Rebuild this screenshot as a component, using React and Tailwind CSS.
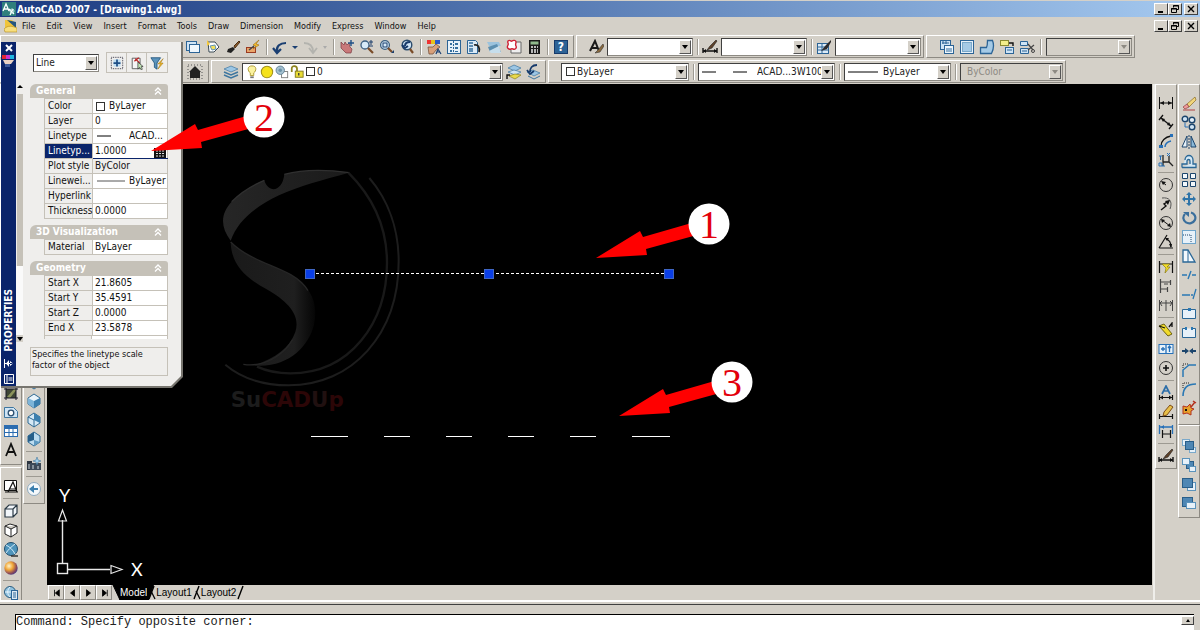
import { useState } from 'react';

const MENUS = ['File', 'Edit', 'View', 'Insert', 'Format', 'Tools', 'Draw', 'Dimension', 'Modify', 'Express', 'Window', 'Help'];

// all icons live on a 16x16 grid
const ICONS = {
  plot: <><rect x="1.5" y="2.5" width="10" height="9" fill="#cfe4f5" stroke="#2c6496" /><rect x="4.5" y="5.5" width="10" height="8" fill="#eef6fc" stroke="#2c6496" /></>,
  publish: <><path d="M3 3h7l4 5-5 5H4z" fill="#fff" stroke="#3b4a55" /><path d="M2 1v6l3-2z" fill="#f5c93c" /><path d="M5 7l5-1 1 4-4 1z" fill="#f4e05c" stroke="#5d92b8" /></>,
  match: <><path d="M14 2L9 7l1 2 5-6z" fill="#8b5a2b" stroke="#4a2d12" /><path d="M8 8l-5 2-1 3 4 1 4-4z" fill="#222" /></>,
  blockEdit: <><rect x="1.5" y="8.5" width="9" height="5" fill="#e9a56a" stroke="#9a3b22" /><path d="M14 1L8 6l3 1-3 3 6-4-3-1z" fill="#f7c02c" stroke="#a06b11" strokeWidth=".6" /><path d="M4 11l5-4" stroke="#444" strokeWidth="1.5" /></>,
  undo: <path d="M5 13c-1-6 3-9 9-9M1 9l4 5 4-4" fill="none" stroke="#1b3f72" strokeWidth="2.2" />,
  redo: <path d="M2 4c6 0 9 3 9 9M7 9l4 5 4-5" fill="none" stroke="#b3b3ae" strokeWidth="1.8" />,
  drop: <path d="M5 7h6l-3 3z" fill="#1b3f72" />,
  dropOff: <path d="M6 7h4l-2 3z" fill="#aaa" />,
  pan: <><path d="M2 3l3 3 1-3 2 3 2-2 1 4 2 2-1 4H7L2 9z" fill="#c9797a" stroke="#7a3b40" strokeWidth=".7" /><path d="M12 1v6M9 4h6" stroke="#1f4f86" strokeWidth="1.4" /></>,
  zoom: <><circle cx="6" cy="6" r="4" fill="#d7ebf8" stroke="#3b5f80" strokeWidth="1.3" /><path d="M9 9l5 5" stroke="#7a4c28" strokeWidth="2.2" /><path d="M12 1v5M10 3h4M10 7h4" stroke="#1d3f6c" /></>,
  zoomWin: <><circle cx="6" cy="6" r="4.4" fill="#d7ebf8" stroke="#3b5f80" strokeWidth="1.3" /><rect x="4" y="4" width="4" height="4" fill="none" stroke="#1d3f6c" /><path d="M9 9l4 4" stroke="#7a4c28" strokeWidth="2.2" /><path d="M12 14h3v-3z" fill="#1d3f6c" /></>,
  zoomPrev: <><circle cx="8" cy="6" r="4.8" fill="#cfe4f5" stroke="#2a4b6c" strokeWidth="1.4" /><path d="M11 10l3 4" stroke="#7a4c28" strokeWidth="2.2" /><path d="M11 3c-3 0-5 1-5 4M3 6l3 3 3-2" fill="none" stroke="#163a6b" strokeWidth="2" /></>,
  props: <><path d="M1 1h4v4H1z" fill="#e33" /><path d="M5 1h4v4H5z" fill="#e6c21a" /><path d="M9 1h5v4H9z" fill="#2a58c8" /><path d="M2 8h5l3-3 4 3-4 3-3 4H3z" fill="#d8a07a" stroke="#6b4632" strokeWidth=".7" /><path d="M10 15l2-5 3 5M11 13h3" stroke="#1b3f72" fill="none" strokeWidth="1.2" /></>,
  dc: <><rect x="1.5" y="1.5" width="13" height="13" fill="#e7f1f9" stroke="#2c6496" /><path d="M4 4h2v2H4zM4 8h2v1H4zM4 11h2v2H4zM9 4h3v2H9zM9 8h3v2H9zM9 12h3v1H9z" fill="#356f9f" /><path d="M7.500 2v12" stroke="#2c6496" strokeDasharray="2 1" /></>,
  tool: <><path d="M1.500 1.500h8l2 2v11h-10z" fill="#dcebf7" stroke="#2c6496" /><path d="M3 4h4M3 7h4M3 10h4M3 12h4" stroke="#356f9f" strokeWidth="1.5" /><path d="M8 6c4-1 6 2 5 7" fill="none" stroke="#222" strokeWidth="1.8" /></>,
  sheet: <><path d="M1 3h12l2 4H3z" fill="#9cc3dd" /><path d="M2 8l9-3 4 8H4z" fill="#5c8fb0" /><path d="M3 12l10-5 2 7H5z" fill="#c6deec" /></>,
  markup: <><path d="M10 3h5v11H5v-3" fill="#eee" stroke="#666" /><path d="M2 2c2-2 3 1 4 0s4-1 4 1-1 2 0 4-1 4-3 3-2 1-4 0-2-2-1-4-1-2 0-4z" fill="#fff" stroke="#cf2033" strokeWidth="1.4" /></>,
  calc: <><rect x="3" y="1" width="11" height="14" fill="#1a1a1a" /><rect x="4.500" y="2.500" width="8" height="3" fill="#8fb98c" /><path d="M5 8h2M8 8h2M11 8h1M5 11h2M8 11h2M11 11h1M5 13h2M8 13h2M11 13h1" stroke="#eee" strokeWidth="1.4" /></>,
  textStyle: <><path d="M2 12L7 2l4 10M4 9h6" fill="none" stroke="#1a1a1a" strokeWidth="2" /><path d="M15 5l-5 6-3 3 5-1 4-6z" fill="#8b6a3d" stroke="#333" strokeWidth=".6" /></>,
  dimStyle: <><path d="M1 9v5M15 9v5M1 12h14" stroke="#111" strokeWidth="1.4" /><path d="M1 12l3-2v4zM15 12l-3-2v4z" fill="#111" /><path d="M14 1L8 7l-3 4 5-2 5-7z" fill="#5e4128" stroke="#222" strokeWidth=".6" /></>,
  tableStyle: <><rect x="1.500" y="4.500" width="11" height="10" fill="#dcebf7" stroke="#2c6496" /><path d="M2 8h11M2 11h11M6 5v9" stroke="#2c6496" /><path d="M15 1l-5 5-5 6 6-2 4-7z" fill="#2d2a2a" /></>,
  vports: <><rect x="1.500" y="1.500" width="10" height="9" fill="#cfe4f5" stroke="#2c6496" /><path d="M3 4h7M4 2v3M7 2v3" stroke="#2c6496" /><rect x="5.500" y="6.500" width="9" height="8" fill="#eef6fc" stroke="#2c6496" /><path d="M7 10h6M7 12h6" stroke="#356f9f" /></>,
  vpOne: <><rect x="1.500" y="1.500" width="13" height="13" fill="#e7f1f9" stroke="#2c6496" /><rect x="3.500" y="3.500" width="9" height="9" fill="#a5cae6" stroke="#7ba9ca" /></>,
  vpPoly: <path d="M8.500 1.500h5c2 5 1 9-1 13h-11v-6h6c1-2 1-4 1-7z" fill="#a5cae6" stroke="#2c6496" strokeWidth="1.300" />,
  vpObj: <><rect x="1.500" y="1.500" width="8" height="5" fill="#f3ee8a" stroke="#8a8a30" /><path d="M10 4h4v3" stroke="#111" fill="none" strokeWidth="1.400" /><rect x="6.500" y="8.500" width="8" height="6" fill="#cfe4f5" stroke="#2c6496" /><path d="M8 11h5" stroke="#2c6496" /></>,
  vpClip: <><path d="M1.500 2.500h7v4h-7zM1.500 9.500h8v5h-8z" fill="#cfe4f5" stroke="#2c6496" /><path d="M3 12h5" stroke="#2c6496" /><path d="M9 5l5 6M9 11l6-5" stroke="#444" strokeWidth="1.200" /><circle cx="14" cy="12" r="1.500" fill="none" stroke="#444" /></>,
  house: <><path d="M2 8l6-6 6 6z" fill="#222" /><rect x="3" y="7" width="10" height="7" fill="#222" /><path d="M1 1h14v14H1z" fill="none" stroke="#555" strokeDasharray="1 2" /></>,
  layers: <><path d="M1 5l7-3 7 3-7 3z" fill="#9cc6e4" stroke="#3e769f" strokeWidth=".700" /><path d="M1 8l7 3 7-3M1 11l7 3 7-3" fill="none" stroke="#3e769f" strokeWidth="1.400" /></>,
  layerCur: <><path d="M2 4l6-3 7 3-6 3z" fill="#9cc6e4" stroke="#3e769f" strokeWidth=".700" /><path d="M2 8l6-2 7 2-6 3z" fill="#cfe4f5" stroke="#3e769f" strokeWidth=".700" /><path d="M3 12l6-2 6 1-6 4z" fill="#e8d84b" stroke="#8d8420" strokeWidth=".700" /><path d="M1 15v-4h3" fill="none" stroke="#111" strokeWidth="1.400" /></>,
  layerPrev: <><path d="M2 8l6-2 7 3-6 3z" fill="#9cc6e4" stroke="#3e769f" strokeWidth=".700" /><path d="M3 12l6 3 6-3" fill="none" stroke="#3e769f" /><path d="M12 1c-5 0-7 3-7 7M2 6l3 4 4-3" fill="none" stroke="#163a6b" strokeWidth="1.800" /></>,
  bulb: <><path d="M8 1c6 0 5 6 2 8v3H6V9C3 7 2 1 8 1z" fill="#fbf3a0" stroke="#a9952b" /><path d="M6 13h4v2H6z" fill="#777" /></>,
  sun: <><circle cx="8" cy="8" r="6.500" fill="#f5e21b" stroke="#a2921a" strokeWidth="1.200" /></>,
  freeze: <><rect x="7.500" y="7.500" width="7" height="7" fill="#fff" stroke="#777" /><circle cx="6" cy="6" r="4.800" fill="#a4c1d1" stroke="#5f7f92" /><circle cx="6" cy="6" r="2" fill="#6d93a8" /></>,
  lock: <><path d="M2 8V4c0-4 6-3 6 0v4" fill="none" stroke="#8d8420" strokeWidth="2" /><rect x="6" y="7" width="9" height="7" fill="#e9dc35" stroke="#7c741b" /><path d="M10 9v3" stroke="#333" strokeWidth="1.500" /></>,
  qselect: <><rect x="1.500" y="1.500" width="13" height="13" fill="none" stroke="#223" strokeDasharray="1 1" /><rect x="4" y="4" width="8" height="8" fill="#bcdcf2" /><path d="M8 4v8M4 8h8" stroke="#1f4f86" strokeWidth="2" /></>,
  pick: <><path d="M2.500 2.500h9v12h-9z" fill="#f5f5f5" stroke="#555" /><path d="M6 3l5 5M10 2L5 6" stroke="#b92323" strokeWidth="1.500" /><path d="M9 7v8l2-2 2 3 1-1-1-3h2z" fill="#bfe3b4" stroke="#333" strokeWidth=".800" /></>,
  filter: <><path d="M1 2h11L8 8v7l-3-2V8z" fill="#5b93bb" stroke="#24587f" /><path d="M15 3l-6 6h3l-3 6 6-7h-3z" fill="#f7c02c" stroke="#9a6f0d" strokeWidth=".600" /></>,
  wipe: <><path d="M3 4h10v9H3z" fill="#3d4535" /><path d="M4 12l7-8h3L7 13z" fill="#8a935c" /><path d="M1 4h14M3 1v14M13 1v14M1 13h14" stroke="#1b1b2b" /></>,
  region: <><path d="M1.500 3.500h9l4 4v6h-13z" fill="#cfe4f5" stroke="#3e769f" /><circle cx="8" cy="9" r="2.800" fill="#fff" stroke="#2b4f70" strokeWidth="1.300" /></>,
  table: <><rect x="1.500" y="2.500" width="13" height="11" fill="#fff" stroke="#2b6cb0" /><path d="M1 3h14v3H1z" fill="#2b6cb0" /><path d="M1 9.500h14M6 6v8M10 6v8" stroke="#2b6cb0" /></>,
  mtext: <path d="M3 14L8 2l5 12M5 10h6" fill="none" stroke="#111" strokeWidth="1.800" />,
  wipeText: <><path d="M1.500 2.500h12v10h-12z" fill="#fff" stroke="#111" /><path d="M5 14l5-10 4 10M7 11h6M2 14h13" fill="none" stroke="#111" strokeWidth="1.200" /></>,
  box3d: <path d="M2 6h8v8H2zM2 6l4-4h8v8l-4 4M10 6l4-4" fill="#f2f6fa" stroke="#2a3945" strokeWidth="1.200" />,
  wire: <path d="M2 4l5-2 7 2v7l-6 4-6-3zM2 4l6 3 6-3M8 7v8" fill="#fff" stroke="#222" />,
  sphereX: <><circle cx="8" cy="8" r="6.500" fill="#4f94bb" stroke="#1f4c6c" /><path d="M3 4c4 2 7 5 9 9M12 3C8 6 5 9 3 12" stroke="#d5ecf8" fill="none" /><path d="M8 15h7" stroke="#333" strokeWidth="1.500" /></>,
  sphere: <><defs><radialGradient id="ball" cx=".35" cy=".35" r=".75"><stop offset="0" stopColor="#fff3c9" /><stop offset=".4" stopColor="#f0a537" /><stop offset=".75" stopColor="#8a4a5a" /><stop offset="1" stopColor="#3b3690" /></radialGradient></defs><circle cx="8" cy="8" r="6.700" fill="url(#ball)" /></>,
  render: <><circle cx="7" cy="7" r="5.500" fill="#8fc1de" stroke="#2a5d80" /><path d="M2 7h10M7 2c-3 3-3 7 0 10" fill="none" stroke="#e9f6ff" /><rect x="8.500" y="5.500" width="6" height="9" fill="#dbe9f3" stroke="#2c6496" /><path d="M10 8h3M10 10h3M10 12h3" stroke="#2c6496" /></>,
  isoTop: <path d="M8 1l6 4v6l-6 4-6-4V5z" fill="#e9f4fb" stroke="#2f6a94" />,
  isoSW: <><path d="M8 1l6 4v6l-6 4-6-4V5z" fill="#e9f4fb" stroke="#2f6a94" /><path d="M2 5l6 3v7l-6-4z" fill="#7db4d8" /><path d="M8 8l6-3v6l-6 4z" fill="#3c7fae" /></>,
  isoSE: <><path d="M8 1l6 4v6l-6 4-6-4V5z" fill="#d5e9f6" stroke="#2f6a94" /><path d="M8 1l6 4v6L8 8z" fill="#3c7fae" /><path d="M2 5l6 3v7" fill="none" stroke="#2f6a94" /></>,
  isoNE: <><path d="M8 1l6 4v6l-6 4-6-4V5z" fill="#bcdcf0" stroke="#2f6a94" /><path d="M8 1v8l-6 2V5z" fill="#265f8a" /><path d="M8 9l6 2-6 4z" fill="#5e9ac2" /></>,
  camera: <><path d="M1 5h5v9H1z" fill="#2b3440" /><rect x="4" y="7" width="11" height="7" fill="#3d4a58" /><path d="M11 1l1 3 3 1-3 1-1 3-1-3-3-1 3-1z" fill="#9fd0ee" stroke="#2f6a94" strokeWidth=".500" /><path d="M3 8v5M7 9v4M12 10v3" stroke="#cfd8df" /></>,
  back: <><circle cx="8" cy="8" r="6.500" fill="#f4f8fb" stroke="#8faabf" /><path d="M3 8l5-4v3h4v2H8v3z" fill="#3c7fae" /></>,
  dimLin: <><path d="M1.500 2v12M14.500 2v12M2 8h12" stroke="#111" /><path d="M2 8l4-2v4zM14 8l-4-2v4z" fill="#111" /></>,
  dimAli: <><path d="M3 4l10 8M1 6l4-5M11 15l4-5" stroke="#111" strokeWidth="1.300" /><path d="M3 4l4 1-2 3zM13 12l-4-1 2-3z" fill="#111" /></>,
  dimArc: <><path d="M3 13C3 8 7 4 13 3" fill="none" stroke="#111" strokeWidth="1.300" /><path d="M7 14c0-3 2-5 6-6" fill="none" stroke="#2670b8" strokeWidth="1.500" /><path d="M1 12h4v3H1zM12 1h3v3h-3z" fill="#2670b8" /></>,
  dimOrd: <><path d="M5 3v11M5 10h6l4 4M11 10V4" fill="none" stroke="#222" strokeWidth="1.300" /><path d="M1 4h3M2.500 4v4M1 11h3v3H1zM9 1l3 3M12 1L9 4M4 14h3" stroke="#2670b8" /></>,
  dimRad: <><circle cx="8" cy="8" r="6.500" fill="none" stroke="#333" /><path d="M8 8L4 5" stroke="#111" /><path d="M3 4l5 1-3 3z" fill="#111" /></>,
  dimJog: <><path d="M4 2c7-1 11 3 8 11" fill="none" stroke="#555" /><path d="M3 14l5-4-2-2 5-3" fill="none" stroke="#111" strokeWidth="1.400" /><path d="M12 4L7 5l3 4z" fill="#111" /></>,
  dimDia: <><circle cx="8" cy="8" r="6.500" fill="none" stroke="#333" /><path d="M4 5l8 6" stroke="#111" /><path d="M3 4l4 1-3 3zM13 12l-4-1 3-3z" fill="#111" /></>,
  dimAng: <><path d="M1 14h14M1 14L9 1M8 5c4 1 5 4 5 8" fill="none" stroke="#111" strokeWidth="1.200" /><path d="M7 4l4 0-2 3zM13 14l-2-4h3z" fill="#111" /></>,
  dimQuick: <><path d="M1.500 2v12M14.500 2v12M2 5h12" stroke="#111" strokeWidth="1.200" /><path d="M4 5l8 0-3 3h3L7 14l1-5z" fill="#f3dd2b" stroke="#8a7a10" strokeWidth=".700" /></>,
  dimBase: <path d="M2.500 1v14M3 4h9M3 11h6M12.500 2v5M9.500 9v5M6 6h4" stroke="#444" fill="none" strokeWidth="1.200" />,
  dimCont: <path d="M1.500 3v11M8 3v11M14.500 3v11M2 6h12M4 9l-2-3 2-2M12 4l2 2-2 3" stroke="#444" fill="none" />,
  leader: <><path d="M1 4l5-2 8 10-4 2z" fill="#f0da2c" stroke="#6d6212" /><path d="M1 4l6 2M11 5l3-4v4" stroke="#111" strokeWidth="1.300" fill="none" /></>,
  tol: <><rect x="1" y="3.500" width="14" height="9" fill="#e7f1f9" stroke="#2670b8" /><path d="M8 4v8M3 8h4M5 6v4M11.500 5v6M10 7l1.500-2L13 7" stroke="#2670b8" strokeWidth="1.300" fill="none" /></>,
  center: <><circle cx="8" cy="8" r="6.500" fill="none" stroke="#333" /><path d="M8 5v6M5 8h6" stroke="#111" strokeWidth="1.600" /></>,
  dimEdit: <><path d="M4 9l4-8 4 8M5.500 6h5" fill="none" stroke="#2d6ea8" strokeWidth="1.700" /><path d="M1.500 10v5M14.500 10v5M2 12.500h12" stroke="#111" strokeWidth="1.200" /><path d="M2 12.500l3-2v4zM14 12.500l-3-2v4z" fill="#111" /></>,
  dimTedit: <><path d="M1.500 10v5M14.500 10v5M2 12.500h12" stroke="#111" strokeWidth="1.200" /><path d="M12 1l3 2-6 8-4 1 1-4z" fill="#e8c04a" stroke="#7d4d17" /></>,
  dimUpd: <><path d="M1.500 2v9M14.500 2v9M2 4h12" stroke="#2670b8" strokeWidth="1.300" /><path d="M4.500 7v8M12.500 7v8M5 11h8" stroke="#111" strokeWidth="1.200" /><path d="M3 4l3-2v4z" fill="#2670b8" /></>,
  erase: <><path d="M2 14h12" stroke="#b04141" /><path d="M14 1l-8 7 2 3 7-7z" fill="#f1d67b" stroke="#8a6b27" strokeWidth=".700" /><path d="M6 8l-4 3 2 2 4-2z" fill="#ef9a9a" stroke="#8d4040" strokeWidth=".700" /></>,
  copy: <><circle cx="4" cy="4" r="2.800" fill="#cfe4f5" stroke="#1c456c" strokeWidth="1.400" /><circle cx="11" cy="5" r="2.800" fill="#e7f1f9" stroke="#1c456c" strokeWidth="1.400" /><circle cx="11" cy="12" r="2.800" fill="#cfe4f5" stroke="#1c456c" strokeWidth="1.400" /><path d="M4 8v4h3" fill="none" stroke="#2670b8" /></>,
  mirror: <><path d="M6 2v11H1z" fill="#e7f1f9" stroke="#1c456c" /><path d="M10 2v11h5z" fill="#8ab8d8" stroke="#1c456c" /><path d="M8 1v14" stroke="#1c456c" strokeDasharray="2 1" /></>,
  offset: <path d="M1 14.500h14V11h-3V7c0-6-8-6-8 0M1 14.500V11h5V8c0-2 3-2 3 0v3" fill="#d5e8f5" stroke="#2a6796" strokeWidth="1.300" />,
  array: <path d="M1.500 1.500h5v5h-5zM9.500 1.500h5v5h-5zM1.500 9.500h5v5h-5zM9.500 9.500h5v5h-5z" fill="#f3f8fc" stroke="#1c456c" />,
  move: <path d="M8 1l3 3H9v3h3V5l3 3-3 3V9H9v3h2l-3 3-3-3h2V9H4v2L1 8l3-3v2h3V4H5z" fill="#2f74a8" />,
  rotate: <><path d="M4 4a6 5.500 0 1 0 6-1.500" fill="none" stroke="#3b6f9c" strokeWidth="2.200" /><path d="M2 2h6v5z" fill="#3b6f9c" /></>,
  scale: <><rect x="1.500" y="1.500" width="13" height="13" fill="#e7f1f9" stroke="#6fa5cb" /><path d="M2 6h8v8" fill="none" stroke="#1c456c" strokeDasharray="1 1" /></>,
  stretch: <><path d="M2 2h5l7 12H2z" fill="#f3f8fc" stroke="#2a6796" strokeWidth="1.300" /><path d="M7 2v12" stroke="#2a6796" /></>,
  trim: <path d="M1 8h5M11 8h4M7 12l3-8" stroke="#2a78b4" strokeWidth="1.400" />,
  extend: <path d="M1 9h8M10 9h2M12 13l3-10" stroke="#2a78b4" strokeWidth="1.300" />,
  breakPt: <><path d="M1.500 4.500h13v9h-13z" fill="#e7f1f9" stroke="#2a6796" /><path d="M7 3h3v3H7z" fill="#2a78b4" /></>,
  breakIt: <><path d="M5 4.500H1.500v9h13v-9H11" fill="#e7f1f9" stroke="#2a6796" /><path d="M4 3h2v3H4zM10 3h2v3h-2z" fill="#2a78b4" /></>,
  join: <><path d="M1 8h5M10 8h5" stroke="#1c456c" strokeWidth="1.800" /><path d="M8 8L4 5v6zM8 8l4-3v6z" fill="#1c456c" /></>,
  chamfer: <><path d="M2 15V8l6-5h7" fill="none" stroke="#2a78b4" strokeWidth="1.500" /><path d="M2 6V2h6" fill="none" stroke="#222" strokeDasharray="1 1" /></>,
  fillet: <><path d="M2 15C2 7 6 3 15 3" fill="none" stroke="#2a78b4" strokeWidth="1.600" /><path d="M2 7V2h6" fill="none" stroke="#222" strokeDasharray="1 1" /></>,
  explode: <><path d="M2 6l4 1 3-3 1 4 3 1-3 2v4l-4-2-4 1z" fill="#e6a12a" stroke="#b3331f" /><path d="M10 7l4-5M12 1l3 2" stroke="#b3331f" strokeWidth="1.500" /><path d="M4 9h2v2H4z" fill="#111" /></>,
  front: <><rect x="1.500" y="1.500" width="7" height="6" fill="#e7f1f9" stroke="#7ba9ca" /><rect x="8.500" y="9.500" width="6" height="5" fill="#e7f1f9" stroke="#7ba9ca" /><rect x="4.500" y="3.500" width="8" height="8" fill="#4f87b4" stroke="#295e89" /></>,
  sendBack: <><rect x="5.500" y="4.500" width="7" height="7" fill="#4f87b4" stroke="#295e89" /><rect x="1.500" y="1.500" width="7" height="6" fill="#e7f1f9" stroke="#5b93bb" /><rect x="8.500" y="9.500" width="6" height="5" fill="#e7f1f9" stroke="#5b93bb" /></>,
  above: <><rect x="6.500" y="6.500" width="8" height="8" fill="#e7f1f9" stroke="#5b93bb" /><rect x="1.500" y="2.500" width="10" height="9" fill="#4f87b4" stroke="#295e89" /></>,
  under: <><rect x="1.500" y="2.500" width="10" height="9" fill="#4f87b4" stroke="#295e89" /><rect x="5.500" y="7.500" width="9" height="6" fill="#e7f1f9" stroke="#5b93bb" /></>,
};

function Icon({ name, size = 16 }) {
  return (
    <svg width={size} height={size} viewBox="0 0 16 16" fill="none" className="block shrink-0" aria-hidden="true">
      {ICONS[name]}
    </svg>
  );
}

function ToolButton({ name }) {
  return (
    <button type="button" aria-label={name} className="block size-4 shrink-0">
      <Icon name={name} />
    </button>
  );
}

function SmallArrow({ name, label }) {
  return (
    <button type="button" aria-label={label} className="flex w-1.5 shrink-0 justify-center">
      <Icon name={name} size={16} />
    </button>
  );
}

const VSep = () => <span className="ml-px h-4 w-0.5 shrink-0 border-l border-[#9d9a92] border-r border-r-white" />;
const HSep = () => <span className="my-px h-px w-4 shrink-0 bg-[#9d9a92]" />;

function Bar({ className = '', children }) {
  return (
    <div className={`flex h-[23px] shrink-0 items-center border border-t-white border-l-white border-r-[#8d8a83] border-b-[#8d8a83] ${className}`}>
      {children}
    </div>
  );
}

function Rail({ className = '', items }) {
  return (
    <div className={`flex w-[22px] shrink-0 flex-col items-center gap-[3px] border border-t-white border-l-white border-r-[#8d8a83] border-b-[#8d8a83] ${className}`}>
      {items.map((item, i) => (item === '-' ? <HSep key={i} /> : <ToolButton key={i} name={item} />))}
    </div>
  );
}

function Combo({ label, value = '', prefix, disabled, className = '' }) {
  return (
    <div className={`flex h-[18px] shrink-0 items-center border border-t-[#404040] border-l-[#404040] border-r-[#8d8a83] border-b-[#8d8a83] ${disabled ? 'bg-[#d4d0c8]' : 'bg-white'} ${className}`}>
      {prefix}
      <div className="relative flex h-full min-w-0 flex-1">
        <select aria-label={label} disabled={disabled} className="h-full min-w-0 flex-1 appearance-none overflow-hidden bg-transparent pr-3 pl-0.5 text-[10px] leading-4 text-[#222] outline-none disabled:text-[#8d8a83]">
          <option>{value}</option>
        </select>
        <span className="pointer-events-none absolute inset-y-px right-px flex w-3 items-center justify-center border border-t-white border-l-white border-r-[#555] border-b-[#555] bg-[#d4d0c8]">
          <svg width="6" height="4" viewBox="0 0 6 4"><path d="M0 0h6L3 4z" fill={disabled ? '#8d8a83' : '#000'} /></svg>
        </span>
      </div>
    </div>
  );
}

function WindowButtons() {
  const cls = 'flex h-3 w-[14px] items-center justify-center border border-t-white border-l-white border-r-[#404040] border-b-[#404040] bg-[#d4d0c8]';
  return (
    <div className="ml-auto flex pr-0.5">
      <button type="button" aria-label="Minimize" className={cls}>
        <svg width="8" height="8" viewBox="0 0 8 8"><path d="M1 6h5v2H1z" fill="#000" /></svg>
      </button>
      <button type="button" aria-label="Restore" className={cls}>
        <svg width="8" height="8" viewBox="0 0 8 8" fill="none" stroke="#000"><path d="M2.500 2.500v-2h5v4h-2M.5 3.500h5v4h-5zM2 1h6M0 4h6" /></svg>
      </button>
      <button type="button" aria-label="Close" className={`ml-0.5 ${cls}`}>
        <svg width="8" height="8" viewBox="0 0 8 8" stroke="#000" strokeWidth="1.400"><path d="M1 1l6 6M7 1L1 7" /></svg>
      </button>
    </div>
  );
}

function TitleBar() {
  return (
    <header className="mt-px flex h-4 shrink-0 items-center bg-linear-to-r from-[#1c3a80] to-[#a6caf0] pl-0.5">
      <svg width="14" height="14" viewBox="0 0 14 14" className="mr-px">
        <rect width="14" height="14" fill="#2f7f7c" />
        <path d="M1 9l3-7 3 7M2 7h4M8 13l3-6M7 7l5 5" stroke="#fff" fill="none" strokeWidth="1.300" />
        <circle cx="10" cy="9" r="2" fill="none" stroke="#cfeeed" />
      </svg>
      <h1 className="text-[10px] font-bold whitespace-nowrap text-white">AutoCAD 2007 - [Drawing1.dwg]</h1>
      <WindowButtons />
    </header>
  );
}

function MenuBar() {
  return (
    <nav className="flex h-[17px] shrink-0 items-center pl-1">
      <svg width="13" height="14" viewBox="0 0 13 14" className="mr-[5px]">
        <path d="M1 1h7l4 4v8H1z" fill="#f0c53a" />
        <path d="M3 1l9 2v6z" fill="#27567f" />
        <path d="M0 10c4-4 8-3 13-1v4H1z" fill="#f8df7d" stroke="#b18a1d" strokeWidth=".600" />
      </svg>
      <ul className="flex gap-[11px] text-[9px] leading-4 text-[#111]">
        {MENUS.map((m) => (
          <li key={m}><button type="button">{m}</button></li>
        ))}
      </ul>
      <WindowButtons />
    </nav>
  );
}

function HelpButton() {
  return (
    <button type="button" aria-label="Help topics" className="flex size-4 shrink-0 items-center justify-center">
      <span className="flex h-[14px] w-[14px] items-center justify-center border border-[#163a6b] bg-[#2d6396] text-[12px] leading-3 font-bold text-white">?</span>
    </button>
  );
}

function Toolbars() {
  return (
    <div className="flex shrink-0 flex-col gap-0.5 pb-px">
      <div className="flex gap-0.5 pt-px">
        <Bar className="gap-1 pr-1 pl-[184px]">
          <ToolButton name="plot" />
          <ToolButton name="publish" />
          <ToolButton name="match" />
          <ToolButton name="blockEdit" />
          <VSep />
          <ToolButton name="undo" />
          <SmallArrow name="drop" label="Undo list" />
          <ToolButton name="redo" />
          <SmallArrow name="dropOff" label="Redo list" />
          <VSep />
          <ToolButton name="pan" />
          <ToolButton name="zoom" />
          <ToolButton name="zoomWin" />
          <ToolButton name="zoomPrev" />
          <VSep />
          <ToolButton name="props" />
          <ToolButton name="dc" />
          <ToolButton name="tool" />
          <ToolButton name="sheet" />
          <ToolButton name="markup" />
          <ToolButton name="calc" />
          <VSep />
          <HelpButton />
        </Bar>
        <Bar className="gap-[3px] pr-0.5 pl-[11px]">
          <ToolButton name="textStyle" />
          <Combo label="Text style" className="w-[86px]" />
          <VSep />
          <ToolButton name="dimStyle" />
          <Combo label="Dimension style" className="w-[86px]" />
          <VSep />
          <ToolButton name="tableStyle" />
          <Combo label="Table style" className="w-[86px]" />
        </Bar>
        <Bar className="gap-1 pr-0.5 pl-3">
          <ToolButton name="vports" />
          <ToolButton name="vpOne" />
          <ToolButton name="vpPoly" />
          <ToolButton name="vpObj" />
          <ToolButton name="vpClip" />
          <VSep />
          <Combo label="Viewport scale" disabled className="w-[86px]" />
        </Bar>
      </div>
      <div className="flex gap-0.5">
        <Bar className="pr-[5px] pl-[186px]">
          <ToolButton name="house" />
        </Bar>
        <Bar className="gap-[3px] pr-1 pl-[11px]">
          <ToolButton name="layers" />
          <Combo
            label="Layer"
            value="0"
            className="w-[261px]"
            prefix={
              <span className="flex items-center gap-px pl-0.5">
                <Icon name="bulb" size={14} />
                <Icon name="sun" size={14} />
                <Icon name="freeze" size={14} />
                <Icon name="lock" size={14} />
                <span className="ml-px size-[9px] border border-[#333] bg-white" />
              </span>
            }
          />
          <ToolButton name="layerCur" />
          <ToolButton name="layerPrev" />
        </Bar>
        <Bar className="gap-[3px] pr-0.5 pl-3">
          <Combo label="Color" value="ByLayer" className="w-[128px]" prefix={<span className="ml-1 size-[9px] border border-[#333] bg-white" />} />
          <VSep />
          <Combo
            label="Linetype"
            value="ACAD...3W100"
            className="w-[137px]"
            prefix={<svg width="56" height="2" className="shrink-0"><path d="M3 1h14M34 1h14" stroke="#000" /></svg>}
          />
          <VSep />
          <Combo label="Lineweight" value="ByLayer" className="w-[107px]" prefix={<svg width="36" height="2" className="shrink-0"><path d="M3 1h30" stroke="#000" /></svg>} />
          <VSep />
          <Combo label="Plot style" value="ByColor" disabled className="w-[103px]" prefix={<span className="w-1" />} />
        </Bar>
      </div>
    </div>
  );
}

function Watermark() {
  return (
    <svg width="230" height="330" viewBox="0 0 690 990" className="absolute top-1.5 left-[153px]">
      <defs>
        <linearGradient id="fin" x1="0" y1="0" x2="1" y2="0">
          <stop offset="0" stopColor="#262626" />
          <stop offset="1" stopColor="#1b1b1b" />
        </linearGradient>
        <linearGradient id="tail" x1="0" y1="0" x2="1" y2="0">
          <stop offset="0" stopColor="#1a1a1a" />
          <stop offset=".75" stopColor="#1f1f1f" />
          <stop offset="1" stopColor="#050505" />
        </linearGradient>
      </defs>
      <path d="M92 452C60 410 62 370 95 335c28-28 60-48 98-64 10 38 54 38 60-18 60-16 130-14 194-5-80 22-150 40-210 68-80 38-125 80-145 136z" fill="url(#fin)" />
      <path d="M95 335c28-28 60-48 98-64M253 253c60-16 130-14 194-5" fill="none" stroke="#303030" strokeWidth="4" />
      <path d="M92 456c50 50 120 66 180 98 60 34 84 84 70 150-16 66-80 132-182 122 66-20 110-54 126-100 16-50-20-90-86-128C130 560 94 520 92 456z" fill="url(#tail)" />
      <path d="M92 456c50 50 120 66 180 98 24 14 40 28 52 48M130 823c60 10 120-26 148-74" fill="none" stroke="#262626" strokeWidth="4" />
      <path d="M445 248c80 80 116 170 116 270 0 180-110 332-290 332-40 0-70-6-100-20" fill="none" stroke="#191919" strokeWidth="7" />
      <path d="M508 264c60 70 88 160 88 250 0 220-140 372-330 372-74 0-140-20-190-62" fill="none" stroke="#1d1d1d" strokeWidth="6" />
      <text x="92" y="952" fontSize="64" fontWeight="bold" fontFamily="'DejaVu Sans', sans-serif" fill="#1c1c1c">
        Su<tspan fill="#2c0607">CAD</tspan><tspan fill="#201010">U</tspan><tspan fill="#2c0607">p</tspan>
      </text>
    </svg>
  );
}

function Drawing() {
  const dashes = [[264, 301], [337, 363], [399, 425], [461, 487], [523, 549], [585, 623]];
  return (
    <svg width="640" height="360" className="absolute top-0 left-0" shapeRendering="crispEdges">
      <path d="M264 189.500h358" stroke="#fff" strokeDasharray="3 2" />
      {[263, 442, 622].map((x) => (
        <rect key={x} x={x - 4.5} y="185.500" width="9" height="9" fill="#0a3ee6" stroke="#3f66c4" />
      ))}
      {dashes.map(([a, b]) => (
        <path key={a} d={`M${a} 352.500H${b}`} stroke="#fff" />
      ))}
    </svg>
  );
}

function UcsIcon() {
  return (
    <svg width="104" height="100" className="absolute bottom-1 left-2" fill="none" stroke="#e8e8e8">
      <rect x="2.500" y="82.500" width="10" height="10" strokeWidth="1.400" />
      <path d="M7.500 82V39M13 88.500h42" strokeWidth="1.400" />
      <path d="M7.500 29l4 11h-8zM67 88.500l-11 4v-8z" strokeWidth="1.200" />
      <g fill="#fff" stroke="none" fontSize="18" fontFamily="Lato, sans-serif">
        <text x="4" y="21">Y</text>
        <text x="76" y="95">X</text>
      </g>
    </svg>
  );
}

// arrow head sits bottom left, the number badge top right
function Callout({ n, className }) {
  return (
    <svg width="136" height="74" viewBox="0 -12 136 74" className={`pointer-events-none absolute z-20 ${className}`}>
      <path d="M1 55l44-27 3 6 52-15 2 13-51 14 1 6z" fill="#f00" />
      <circle cx="114" cy="21" r="20.500" fill="#fff" />
      <text x="114" y="35" textAnchor="middle" fontSize="40" fontFamily="'Liberation Serif', serif" fill="#e3000b">{n}</text>
    </svg>
  );
}

function LayoutTabs() {
  const [tab, setTab] = useState('Model');
  const nav = ['M3 1v8M9 1v8L4 5z', 'M8 1v8L3 5z', 'M3 1v8l5-4z', 'M3 1v8l5-4zM9 1v8'];
  return (
    <div className="flex h-[15px] shrink-0 items-stretch pl-px font-['Liberation_Sans',sans-serif] text-[10px] leading-[15px]">
      {nav.map((d, i) => (
        <button key={d} type="button" aria-label={['First tab', 'Previous tab', 'Next tab', 'Last tab'][i]} className="flex w-4 items-center justify-center border border-t-white border-l-white border-r-[#8d8a83] border-b-[#8d8a83]">
          <svg width="9" height="8" viewBox="0 0 11 10"><path d={d} fill="#000" stroke="#000" /></svg>
        </button>
      ))}
      {['Model', 'Layout1', 'Layout2'].map((t, i) => (
        <button key={t} type="button" onClick={() => setTab(t)} className={`flex ${tab === t ? 'text-white' : 'text-black'}`}>
          {i === 0 && (
            <svg width="8" height="15" viewBox="0 0 8 15"><path d="M1 0l7 15V0z" fill={tab === t ? '#000' : 'none'} stroke="#000" /></svg>
          )}
          <span className={tab === t ? 'bg-black' : ''}>{t}</span>
          <svg width="9" height="15" viewBox="0 0 9 15">
            {tab === t && <path d="M0 0h7L2 15H0z" fill="#000" />}
            {i < 2 && <path d="M4 6l4 8" stroke="#000" strokeWidth="1.200" />}
            <path d="M7 1L2 14" stroke="#000" strokeWidth="1.400" />
          </svg>
        </button>
      ))}
    </div>
  );
}

const GROUPS = [
  {
    title: 'General',
    rows: [
      ['Color', 'ByLayer', 'swatch'],
      ['Layer', '0'],
      ['Linetype', 'ACAD...', 'short'],
      ['Linetyp...', '1.0000', 'active'],
      ['Plot style', 'ByColor', 'locked'],
      ['Linewei...', 'ByLayer', 'long'],
      ['Hyperlink', ''],
      ['Thickness', '0.0000'],
    ],
  },
  { title: '3D Visualization', rows: [['Material', 'ByLayer']] },
  {
    title: 'Geometry',
    rows: [['Start X', '21.8605'], ['Start Y', '35.4591'], ['Start Z', '0.0000'], ['End X', '23.5878']],
  },
];

function PropertyRow({ row }) {
  const [label, value, kind] = row;
  const active = kind === 'active';
  return (
    <tr className="h-[15px]">
      <th scope="row" className={`border border-[#c5c1b8] p-0 pl-[3px] text-left font-normal whitespace-nowrap ${active ? 'bg-[#0a246a] text-white' : ''}`}>{label}</th>
      <td className={`border border-[#c5c1b8] p-0 ${kind === 'locked' ? '' : 'bg-white'} ${active ? 'border-y-[#0a246a]' : ''}`}>
        <div className="flex h-[14px] items-center pl-0.5">
          {kind === 'swatch' && <span className="mr-1 ml-px size-[9px] shrink-0 border border-[#333]" />}
          {kind === 'short' && <svg width="34" height="2" className="shrink-0"><path d="M2 1h14" stroke="#000" /></svg>}
          {kind === 'long' && <svg width="34" height="2" className="shrink-0"><path d="M2 1h28" stroke="#555" /></svg>}
          <input aria-label={label} defaultValue={value} className="h-[14px] w-full min-w-0 bg-transparent outline-none" />
          {active && (
            <button type="button" aria-label="Calculator" className="mr-px shrink-0 self-end">
              <svg width="12" height="10" viewBox="0 0 12 10"><rect width="12" height="10" fill="#111" /><path d="M2 3h8M2 5.500h8M2 8h8" stroke="#ddd" strokeDasharray="2 1" /></svg>
            </button>
          )}
        </div>
      </td>
    </tr>
  );
}

function PropertiesPalette() {
  return (
    <aside className="absolute top-[42px] left-px z-10 w-[182px] bg-[#77756f] pr-0.5 pb-0.5 [clip-path:polygon(0_0,100%_0,100%_calc(100%-11px),calc(100%-11px)_100%,0_100%)]">
      <div className="flex bg-[#efeeec] text-[10px] leading-[14px] text-[#111] [clip-path:polygon(0_0,100%_0,100%_calc(100%-10px),calc(100%-10px)_100%,0_100%)]">
        <div className="flex w-[15px] shrink-0 flex-col items-center bg-[#0a246a] py-0.5">
          <button type="button" aria-label="Close palette">
            <svg width="8" height="8" viewBox="0 0 8 8" stroke="#fff" strokeWidth="2"><path d="M1 1l6 6M7 1L1 7" /></svg>
          </button>
          <svg width="13" height="14" viewBox="0 0 13 14" className="mt-0.5">
            <path d="M0 1h4v4H0z" fill="#e0252f" /><path d="M4 1h4v4H4z" fill="#cc33cc" /><path d="M8 1h4v4H8z" fill="#1fb6e0" />
            <path d="M1 6h11l-3 4H3z" fill="#e9d2c4" /><path d="M3 10h5v3H3z" fill="#3c5a9c" />
          </svg>
          <span className="mt-auto mb-2 rotate-180 text-[10px] leading-[13px] font-bold text-white [writing-mode:vertical-rl]">PROPERTIES</span>
          <button type="button" aria-label="Auto-hide" className="mb-1.5">
            <svg width="11" height="9" viewBox="0 0 11 9" fill="#fff"><path d="M1 0h1v9H1zM2 4h8v1H2zM6 1v7L3 4.500zM7 2v5l3-2.500z" /></svg>
          </button>
          <button type="button" aria-label="Palette menu">
            <svg width="10" height="10" viewBox="0 0 10 10" fill="none" stroke="#fff"><path d="M.500.500h9v9h-9zM3 1v8M4.500 4h4M4.500 6h4" /></svg>
          </button>
        </div>
        <div className="mt-[42px] mb-[44px] flex w-[7px] shrink-0 flex-col items-center">
          <svg width="6" height="6" viewBox="0 0 6 6" className="mb-1"><path d="M0 4l3-3 3 3" fill="#000" /></svg>
          <span className="w-1.5 flex-[5] bg-[#c5c1b8]" />
          <span className="w-full flex-[2] bg-[#fafafa]" />
          <span className="flex size-[7px] items-center justify-center bg-[#d4d0c8]"><svg width="6" height="6" viewBox="0 0 6 6"><path d="M0 1h6L3 5z" fill="#000" /></svg></span>
        </div>
        <div className="min-w-0 flex-1 pt-2.5 pr-[13px] pb-2.5 pl-[7px]">
          <div className="mb-[11px] flex items-center pl-[3px]">
            <Combo label="Object type" value="Line" className="w-[66px]" />
            <div className="ml-auto flex border border-[#c5c1b8]">
              {['qselect', 'pick', 'filter'].map((n) => (
                <button key={n} type="button" aria-label={n} className="flex h-[19px] w-[20px] items-center justify-center border-r border-[#c5c1b8] last:border-r-0">
                  <Icon name={n} size={14} />
                </button>
              ))}
            </div>
          </div>
          {GROUPS.map((g) => (
            <section key={g.title} className="mb-1.5 last-of-type:mb-0">
              <h2 className="flex h-3.5 items-center justify-between rounded-tl-[6px] rounded-tr-[3px] bg-[#c5c1b8] pr-1.5 pl-1.5 text-[10px] font-bold text-white">
                {g.title}
                <svg width="8" height="8" viewBox="0 0 8 8" fill="none" stroke="#fff" strokeWidth="1.300"><path d="M1 4l3-3 3 3M1 7.500l3-3 3 3" /></svg>
              </h2>
              <div className="pl-3.5">
                <table className="w-full table-fixed border-collapse">
                  <colgroup><col className="w-12" /><col /></colgroup>
                  <tbody>{g.rows.map((r) => <PropertyRow key={r[0]} row={r} />)}</tbody>
                </table>
              </div>
            </section>
          ))}
          {/* top edge of the next, scrolled-off row */}
          <div className="flex h-[3px] pl-3.5">
            <span className="w-12 border-x border-[#c5c1b8]" />
            <span className="flex-1 border-r border-[#c5c1b8] bg-white" />
          </div>
          <p className="mt-2 border border-[#c5c1b8] pt-px pb-1 pl-px text-[9px] leading-[11px] whitespace-nowrap">
            Specifies the linetype scale<br />factor of the object
          </p>
        </div>
      </div>
    </aside>
  );
}

export default function App() {
  return (
    <div className="relative flex h-screen min-w-0 flex-col overflow-hidden bg-[#d4d0c8] font-['DejaVu_Sans_Condensed','DejaVu_Sans',sans-serif] text-[10px]">
      <TitleBar />
      <MenuBar />
      <Toolbars />

      <main className="flex min-h-0 flex-1">
        <div className="flex w-[22px] shrink-0 flex-col gap-0.5">
          <Rail className="pt-[300px] pb-1.5" items={['wipe', 'region', 'table', 'mtext']} />
          <Rail className="pt-2.5" items={['wipeText', '-', 'box3d', 'wire', 'sphereX', 'sphere', '-', 'render']} />
        </div>
        <Rail className="mr-0.5 ml-px self-start pt-[289px] pb-1.5" items={['isoTop', 'isoSW', 'isoSE', 'isoNE', '-', 'camera', '-', 'back']} />
        <div className="flex min-w-0 flex-1 flex-col">
          <div className="relative min-h-0 flex-1 overflow-hidden bg-black">
            <Watermark />
            <Drawing />
            <UcsIcon />
          </div>
          <LayoutTabs />
        </div>
        <div className="ml-px w-0.5 bg-[#efeeea]" />
        <Rail
          className="self-start pt-2.5 pb-1"
          items={['dimLin', 'dimAli', 'dimArc', 'dimOrd', '-', 'dimRad', 'dimJog', 'dimDia', 'dimAng', '-', 'dimQuick', 'dimBase', 'dimCont', '-', 'leader', 'tol', 'center', '-', 'dimEdit', 'dimTedit', 'dimUpd', '-', 'dimStyle']}
        />
        <div className="ml-px flex flex-col">
          <Rail
            className="pt-[11px] pb-2"
            items={['erase', 'copy', 'mirror', 'offset', 'array', 'move', 'rotate', 'scale', 'stretch', 'trim', 'extend', 'breakPt', 'breakIt', 'join', 'chamfer', 'fillet', 'explode']}
          />
          <Rail className="pt-3 pb-1.5" items={['front', 'sendBack', 'above', 'under']} />
        </div>
      </main>

      <footer className="shrink-0 border-t-2 border-white">
        <div className="mt-0.5 border-t border-[#404040] pt-[9px] pr-1.5 pl-[15px]">
          <div className="flex h-4 items-start border-t border-l border-black bg-white">
            <input
              aria-label="Command line"
              defaultValue="Command: Specify opposite corner:"
              className="h-[15px] min-w-0 flex-1 bg-transparent font-['Liberation_Mono',monospace] text-[12px] leading-[15px] text-[#222] outline-none"
            />
            <button type="button" aria-label="Scroll up" className="mt-px flex h-[9px] w-[13px] items-center justify-center border border-t-white border-l-white border-r-[#404040] border-b-[#404040] bg-[#d4d0c8]">
              <svg width="4" height="3" viewBox="0 0 4 3"><path d="M0 3l2-3 2 3z" fill="#000" /></svg>
            </button>
          </div>
        </div>
      </footer>

      <PropertiesPalette />
      <Callout n="2" className="top-[84px] left-[150px]" />
      <Callout n="1" className="top-[191px] left-[595px]" />
      <Callout n="3" className="top-[349px] left-[618px]" />
    </div>
  );
}
